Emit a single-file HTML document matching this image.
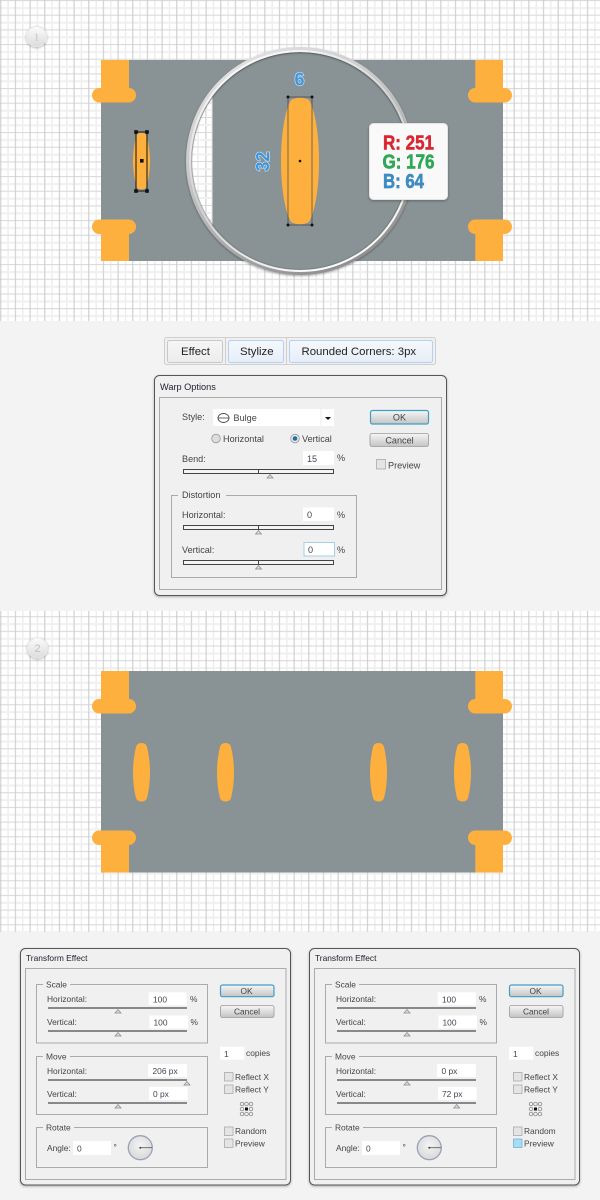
<!DOCTYPE html>
<html><head><meta charset="utf-8"><style>
html,body{margin:0;padding:0;background:#f3f3f3}
svg{display:block}
text{font-family:"Liberation Sans",sans-serif;font-size:8.4px;fill:#444}
.w text{font-size:9.1px}
.w text.t,.t{font-size:9.2px;fill:#223}
.tt{font-size:8.4px;fill:#223}
.v{fill:#445}
.bc{font-size:11.4px;fill:#222}
.rgb{font-size:20px;font-weight:bold;stroke-width:.5;paint-order:stroke}
.lab{font-size:18px;font-weight:bold;fill:#3f95dc;stroke:#cfe8fb;stroke-width:1.2;paint-order:stroke}
.in{fill:#fff}
.gb{fill:none;stroke:#aaa;stroke-width:1}
.lb{fill:#f0f0f0}
.dlg{fill:#f0f0f0;stroke:#555;stroke-width:1}
.pan{fill:#f0f0f0;stroke:#aaa;stroke-width:1}
.btn{fill:url(#bt);stroke:#999;stroke-width:.8}
.ok{fill:url(#bt);stroke:#3c9fc6;stroke-width:1.2}
.cb{fill:#e4e4e4;stroke:#aaa;stroke-width:.8}
.sl{fill:#f4f4f4;stroke:#444;stroke-width:1}
.ln{stroke:#666;stroke-width:1.5}
.tri{fill:#ddd;stroke:#888;stroke-width:.7}
.or{fill:#fdb03e}
</style></head><body>
<svg width="600" height="1200" viewBox="0 0 600 1200" xmlns="http://www.w3.org/2000/svg">
<defs>
<pattern id="g" patternUnits="userSpaceOnUse" width="14.67" height="14.67">
<rect width="14.67" height="14.67" fill="#fff"/>
<rect x="7.6" width="1" height="14.67" fill="#e6e6e6"/>
<rect y="7" width="14.67" height="2" fill="#f0f0f0"/>
<rect y="0" width="14.67" height="1.1" fill="#dadada"/>
<rect x="0.2" width="1.1" height="14.67" fill="#cdcdcd"/>
</pattern>
<linearGradient id="bt" x1="0" y1="0" x2="0" y2="1"><stop offset="0" stop-color="#f6f6f6"/><stop offset="1" stop-color="#c4c4c4"/></linearGradient>
<linearGradient id="ef" x1="0" y1="0" x2="0" y2="1"><stop offset="0" stop-color="#f6f6f6"/><stop offset="1" stop-color="#ececec"/></linearGradient>
<linearGradient id="bl" x1="0" y1="0" x2="0" y2="1"><stop offset="0" stop-color="#f5f8fc"/><stop offset="1" stop-color="#e6eef8"/></linearGradient>
<linearGradient id="ring" x1="0.2" y1="0" x2="0.7" y2="1"><stop offset="0" stop-color="#e4e4e4"/><stop offset=".5" stop-color="#bdbdbd"/><stop offset="1" stop-color="#8e8e8e"/></linearGradient>
<linearGradient id="ring2" x1="0.2" y1="0" x2="0.7" y2="1"><stop offset="0" stop-color="#fff"/><stop offset=".5" stop-color="#cfcfcf"/><stop offset="1" stop-color="#fff"/></linearGradient>
<linearGradient id="bd" x1="0" y1="0" x2="0" y2="1"><stop offset="0" stop-color="#fbfbfb"/><stop offset="1" stop-color="#dcdcdc"/></linearGradient>
<radialGradient id="dial" cx=".5" cy=".4" r=".6"><stop offset="0" stop-color="#f4f4f4"/><stop offset="1" stop-color="#d8d8d8"/></radialGradient>
<filter id="sh" x="-20%" y="-20%" width="140%" height="140%"><feDropShadow dx="0" dy="1" stdDeviation="1.2" flood-color="#000" flood-opacity=".3"/></filter>
<filter id="sh2" x="-10%" y="-10%" width="120%" height="120%"><feDropShadow dx="0" dy="1" stdDeviation="1" flood-color="#000" flood-opacity=".35"/></filter>
</defs>

<rect width="600" height="1200" fill="#f3f3f3"/>

<!-- Panel 1 -->
<rect width="600" height="321" fill="url(#g)"/>
<circle cx="36.5" cy="36.5" r="10" fill="url(#bd)" stroke="#e8e8e8" filter="url(#sh)"/>
<text x="36.5" y="40.5" text-anchor="middle" style="font-size:11px;fill:#c4c4c4;font-family:'Liberation Serif',serif">1</text>
<rect x="101" y="60" width="402" height="201" fill="#899294"/>
<rect class="or" x="101" y="60" width="28" height="30"/>
<rect class="or" x="92" y="88" width="44" height="14.5" rx="7.2"/>
<rect class="or" x="92" y="219.5" width="44" height="14.5" rx="7.2"/>
<rect class="or" x="101" y="232" width="28" height="29"/>
<rect class="or" x="475.3" y="60" width="27.7" height="30"/>
<rect class="or" x="468" y="88" width="44" height="14.5" rx="7.2"/>
<rect class="or" x="468" y="219.5" width="44" height="14.5" rx="7.2"/>
<rect class="or" x="475.3" y="232" width="27.7" height="29"/>
<path class="or" d="M137 134Q141.500 131.500 146 134C148 140 150 150 150 161C150 172 148 182 146 188Q141.500 191 137 188C135 182 133 172 133 161C133 150 135 140 137 134Z"/>
<rect x="136" y="132" width="11" height="59" fill="none" stroke="#111" stroke-width="1"/>
<g fill="#111"><rect x="134.200" y="130.200" width="3.600" height="3.600"/><rect x="145.200" y="130.200" width="3.600" height="3.600"/><rect x="134.200" y="189.200" width="3.600" height="3.600"/><rect x="145.200" y="189.200" width="3.600" height="3.600"/><rect x="140" y="159" width="3.600" height="3.600"/></g>

<!-- Magnifier -->
<circle cx="300" cy="161" r="109" fill="#899294"/>
<path d="M212 96.700A109 109 0 0 0 212 225.300Z" fill="#fff"/>
<path d="M198 122.600V199.400M212 97V225" stroke="#e6e6e6" stroke-width="1" fill="none"/>
<path d="M205.900 106V216" stroke="#cdcdcd" stroke-width="1.100" fill="none"/>
<path d="M203.700 110H212M197.100 125H212M193 140H212M191.200 154.500H212M191.300 169H212M193.500 184H212M197.500 198H212M204.200 213H212" stroke="#f0f0f0" stroke-width="2" fill="none"/>
<path d="M207.700 103H212M200.100 117.500H212M194.800 132.500H212M192 147H212M191 161.500H212M192.100 176.300H212M195.200 191H212M200.500 205.500H212M208.400 220H212" stroke="#dadada" stroke-width="1.100" fill="none"/>
<path class="or" d="M291 100Q300 95.500 309 100C314 108 319 130 319 161C319 192 314 214 309 222Q300 226.500 291 222C286 214 281 192 281 161C281 130 286 108 291 100Z"/>
<rect x="288" y="97" width="24" height="128" fill="none" stroke="#444" stroke-width=".7"/>
<g fill="#111"><circle cx="288" cy="97" r="1.500"/><circle cx="312" cy="97" r="1.500"/><circle cx="288" cy="225" r="1.500"/><circle cx="312" cy="225" r="1.500"/><circle cx="300" cy="161" r="1.300"/></g>
<circle cx="300" cy="161" r="108.300" fill="none" stroke="#6f7779" stroke-width="1" opacity=".5"/>
<circle cx="300" cy="161" r="111.500" fill="none" stroke="url(#ring)" stroke-width="5" filter="url(#sh2)"/>
<circle cx="300" cy="161" r="110" fill="none" stroke="url(#ring2)" stroke-width="2"/>
<text class="lab" x="299.500" y="85.500" text-anchor="middle">6</text>
<text class="lab" transform="translate(269,161.500) rotate(-90)" text-anchor="middle">32</text>

<rect x="369.500" y="123.500" width="78" height="76" rx="4" fill="#f9f9f9" stroke="#e4e4e4" filter="url(#sh)"/>
<text class="rgb" x="383" y="149.700" textLength="51" lengthAdjust="spacingAndGlyphs" style="fill:#e0242e;stroke:#a91c24">R: 251</text>
<text class="rgb" x="382.500" y="168.700" textLength="52" lengthAdjust="spacingAndGlyphs" style="fill:#2bab55;stroke:#1d7f3e">G: 176</text>
<text class="rgb" x="383" y="188" textLength="41" lengthAdjust="spacingAndGlyphs" style="fill:#3a8dc6;stroke:#24628f">B: 64</text>

<!-- Breadcrumb -->
<rect x="164.500" y="337.500" width="271" height="27" rx="2" fill="#f0f0f0" stroke="#cfcfcf"/>
<path d="M225.500 337.500V364.500M286.500 337.500V364.500" stroke="#cfcfcf"/>
<rect x="167.500" y="340.500" width="55" height="22" rx="2" fill="url(#ef)" stroke="#c8c8c8"/>
<rect x="228.500" y="340.500" width="55" height="22" rx="2" fill="url(#bl)" stroke="#b4d0ee"/>
<rect x="289.500" y="340.500" width="143" height="22" rx="2" fill="url(#bl)" stroke="#b4d0ee"/>
<text class="bc" x="181" y="355">Effect</text>
<text class="bc" x="240" y="355">Stylize</text>
<text class="bc" x="301.500" y="355">Rounded Corners: 3px</text>

<!-- Warp dialog -->
<g class="w">
<rect class="dlg" x="154.500" y="375.500" width="292" height="220" rx="5" filter="url(#sh)"/>
<text class="t" x="160" y="390">Warp Options</text>
<rect class="pan" x="159.500" y="397.500" width="282" height="192"/>
<text x="182" y="420">Style:</text>
<rect class="in" x="213" y="409" width="121" height="17"/>
<path d="M321 409V426" stroke="#eee"/>
<ellipse cx="223.500" cy="418" rx="5.500" ry="4.500" fill="none" stroke="#444" stroke-width=".9"/><path d="M218 418H229" stroke="#444" stroke-width=".8"/>
<text x="233.500" y="421">Bulge</text>
<path d="M325 417H331L328 420Z" fill="#111"/>
<circle cx="216" cy="438.500" r="4.300" fill="#ddd" stroke="#999" stroke-width=".8"/>
<text x="223" y="442">Horizontal</text>
<circle cx="295" cy="438.500" r="4.300" fill="#e8e8e8" stroke="#999" stroke-width=".8"/><circle cx="295" cy="438.500" r="2.300" fill="#1f6fa8"/>
<text x="302" y="442">Vertical</text>
<text x="182" y="462">Bend:</text>
<rect class="in" x="303" y="451" width="31" height="14"/>
<text class="v" x="307" y="462">15</text>
<text x="337" y="461">%</text>
<rect class="sl" x="183.500" y="469.500" width="150" height="4"/>
<path d="M258.500 469V474" stroke="#444"/>
<path class="tri" d="M270 474.500L273 478H267Z"/>
<rect x="370.500" y="410.500" width="58" height="13.500" rx="2" class="ok"/>
<text x="399.500" y="420.500" text-anchor="middle">OK</text>
<rect x="370" y="433.500" width="58.500" height="13" rx="2" class="btn"/>
<text x="399.500" y="443.500" text-anchor="middle">Cancel</text>
<rect class="cb" x="376.500" y="459.500" width="9" height="9.500"/>
<text x="388" y="468.500">Preview</text>

<rect class="gb" x="171.500" y="495.500" width="185" height="82"/>
<rect class="lb" x="178" y="490" width="48" height="10"/>
<text x="182" y="498">Distortion</text>
<text x="182" y="518">Horizontal:</text>
<rect class="in" x="303" y="507.500" width="31" height="13.500"/>
<text class="v" x="307" y="518">0</text>
<text x="337" y="518">%</text>
<rect class="sl" x="183.500" y="525.500" width="150" height="4"/>
<path d="M258.500 525V530" stroke="#444"/>
<path class="tri" d="M258.500 530.500L261.500 534H255.500Z"/>
<text x="182" y="553">Vertical:</text>
<rect x="304" y="542.500" width="30.500" height="13.500" fill="#fff" stroke="#a6cdea"/>
<text class="v" x="308" y="553">0</text>
<text x="337" y="553">%</text>
<rect class="sl" x="183.500" y="560.500" width="150" height="4"/>
<path d="M258.500 560V565" stroke="#444"/>
<path class="tri" d="M258.500 565.500L261.500 569H255.500Z"/>
</g>

<!-- Panel 2 -->
<rect y="611" width="600" height="321" fill="url(#g)"/>
<circle cx="37.500" cy="648" r="10" fill="url(#bd)" stroke="#e8e8e8" filter="url(#sh)"/>
<text x="37.500" y="652" text-anchor="middle" style="font-size:11px;fill:#c0c0c0">2</text>
<rect x="101" y="671" width="402" height="201.500" fill="#899294"/>
<rect class="or" x="101" y="671" width="28" height="30"/>
<rect class="or" x="92" y="699" width="44" height="14.500" rx="7.200"/>
<rect class="or" x="92" y="830.500" width="44" height="14.500" rx="7.200"/>
<rect class="or" x="101" y="843" width="28" height="29.500"/>
<rect class="or" x="475.300" y="671" width="27.700" height="30"/>
<rect class="or" x="468" y="699" width="44" height="14.500" rx="7.200"/>
<rect class="or" x="468" y="830.500" width="44" height="14.500" rx="7.200"/>
<rect class="or" x="475.300" y="843" width="27.700" height="29.500"/>
<path class="or" d="M136 747Q137 743 141.500 743Q146 743 147 747C149 755 150 764 150 772.500C150 781 149 790 147 798Q146 801.500 141.500 801.500Q137 801.500 136 798C134 790 133 781 133 772.500C133 764 134 755 136 747Z"/>
<path class="or" d="M220 747Q221 743 225.500 743Q230 743 231 747C233 755 234 764 234 772.500C234 781 233 790 231 798Q230 801.500 225.500 801.500Q221 801.500 220 798C218 790 217 781 217 772.500C217 764 218 755 220 747Z"/>
<path class="or" d="M373 747Q374 743 378.500 743Q383 743 384 747C386 755 387 764 387 772.500C387 781 386 790 384 798Q383 801.500 378.500 801.500Q374 801.500 373 798C371 790 370 781 370 772.500C370 764 371 755 373 747Z"/>
<path class="or" d="M457 747Q458 743 462.500 743Q467 743 468 747C470 755 471 764 471 772.500C471 781 470 790 468 798Q467 801.500 462.500 801.500Q458 801.500 457 798C455 790 454 781 454 772.500C454 764 455 755 457 747Z"/>

<!-- Transform dialog left -->
<g>
<rect class="dlg" x="20.500" y="948.500" width="270" height="236.500" rx="5" filter="url(#sh)"/>
<text class="tt" x="26" y="961">Transform Effect</text>
<rect class="pan" x="25.500" y="968.500" width="260.500" height="211"/>
<rect class="gb" x="36.500" y="984.500" width="171" height="58.500"/>
<rect class="lb" x="43" y="979" width="27" height="10"/>
<text x="46" y="987.500">Scale</text>
<text x="47" y="1002">Horizontal:</text>
<rect class="in" x="148.700" y="992.300" width="38" height="13"/>
<text class="v" x="153" y="1002.500">100</text>
<text x="190" y="1002">%</text>
<path class="ln" d="M48 1008H187"/>
<path class="tri" d="M118 1009.500L121 1013H115Z"/>
<text x="47" y="1025">Vertical:</text>
<rect class="in" x="149.500" y="1015.500" width="38.500" height="13"/>
<text class="v" x="153.500" y="1025.500">100</text>
<text x="190.500" y="1025">%</text>
<path class="ln" d="M48 1031H187"/>
<path class="tri" d="M118 1032.500L121 1036H115Z"/>
<rect class="gb" x="36.500" y="1056.500" width="171" height="58"/>
<rect class="lb" x="43" y="1051" width="27" height="10"/>
<text x="46" y="1059.500">Move</text>
<text x="47" y="1074">Horizontal:</text>
<rect class="in" x="148" y="1064" width="39" height="13"/>
<text class="v" x="152.500" y="1074">206 px</text>
<path class="ln" d="M48 1080H187"/>
<path class="tri" d="M187 1081.500L190 1085H184Z"/>
<text x="47" y="1097">Vertical:</text>
<rect class="in" x="149" y="1087" width="38.700" height="13"/>
<text class="v" x="153" y="1097">0 px</text>
<path class="ln" d="M48 1103H187"/>
<path class="tri" d="M118 1104.500L121 1108H115Z"/>
<rect class="gb" x="36.500" y="1127.500" width="171" height="40"/>
<rect class="lb" x="43" y="1122" width="31" height="10"/>
<text x="46" y="1130.500">Rotate</text>
<text x="47" y="1151">Angle:</text>
<rect class="in" x="73" y="1141" width="38" height="14"/>
<text class="v" x="77" y="1151.500">0</text>
<text x="113.500" y="1150">°</text>
<circle cx="140.300" cy="1147.700" r="12" fill="url(#dial)" stroke="#9aa2b8" stroke-width="1.300"/>
<path d="M140.300 1147.700H152" stroke="#555" stroke-width=".8"/><circle cx="140.300" cy="1147.700" r="1" fill="#444"/>
<rect class="ok" x="220.500" y="985" width="53.500" height="11.700" rx="2"/>
<text x="246.500" y="994" text-anchor="middle">OK</text>
<rect class="btn" x="220.500" y="1005.500" width="53.500" height="12" rx="2"/>
<text x="247" y="1014.500" text-anchor="middle">Cancel</text>
<rect class="in" x="220" y="1046.700" width="24.300" height="13"/>
<text class="v" x="224" y="1057">1</text>
<text x="246" y="1056">copies</text>
<rect class="cb" x="224.500" y="1072.500" width="8.500" height="8.500"/>
<text x="235" y="1080">Reflect X</text>
<rect class="cb" x="224.500" y="1085" width="8.500" height="8.500"/>
<text x="235" y="1092.500">Reflect Y</text>
<g fill="none" stroke="#777" stroke-width=".7"><circle cx="242" cy="1104" r="1.800"/><circle cx="246.500" cy="1104" r="1.800"/><circle cx="251" cy="1104" r="1.800"/><circle cx="242" cy="1109" r="1.800"/><circle cx="251" cy="1109" r="1.800"/><circle cx="242" cy="1114" r="1.800"/><circle cx="246.500" cy="1114" r="1.800"/><circle cx="251" cy="1114" r="1.800"/></g><rect x="245" y="1107.500" width="3" height="3" fill="#111"/>
<rect class="cb" x="224.500" y="1127" width="8.500" height="8.500"/>
<text x="235" y="1134">Random</text>
<rect class="cb" x="224.500" y="1139" width="8.500" height="8.500"/>
<text x="235" y="1146.500">Preview</text>
</g>

<!-- Transform dialog right -->
<g>
<rect class="dlg" x="309.500" y="948.500" width="270" height="236.500" rx="5" filter="url(#sh)"/>
<text class="tt" x="315" y="961">Transform Effect</text>
<rect class="pan" x="314.500" y="968.500" width="260.500" height="211"/>
<rect class="gb" x="325.500" y="984.500" width="171" height="58.500"/>
<rect class="lb" x="332" y="979" width="27" height="10"/>
<text x="335" y="987.500">Scale</text>
<text x="336" y="1002">Horizontal:</text>
<rect class="in" x="437.700" y="992.300" width="38" height="13"/>
<text class="v" x="442" y="1002.500">100</text>
<text x="479" y="1002">%</text>
<path class="ln" d="M337 1008H476"/>
<path class="tri" d="M407 1009.500L410 1013H404Z"/>
<text x="336" y="1025">Vertical:</text>
<rect class="in" x="438.500" y="1015.500" width="38.500" height="13"/>
<text class="v" x="442.500" y="1025.500">100</text>
<text x="479.500" y="1025">%</text>
<path class="ln" d="M337 1031H476"/>
<path class="tri" d="M407 1032.500L410 1036H404Z"/>
<rect class="gb" x="325.500" y="1056.500" width="171" height="58"/>
<rect class="lb" x="332" y="1051" width="27" height="10"/>
<text x="335" y="1059.500">Move</text>
<text x="336" y="1074">Horizontal:</text>
<rect class="in" x="437" y="1064" width="39" height="13"/>
<text class="v" x="441.500" y="1074">0 px</text>
<path class="ln" d="M337 1080H476"/>
<path class="tri" d="M407 1081.500L410 1085H404Z"/>
<text x="336" y="1097">Vertical:</text>
<rect class="in" x="438" y="1087" width="38.700" height="13"/>
<text class="v" x="442" y="1097">72 px</text>
<path class="ln" d="M337 1103H476"/>
<path class="tri" d="M456.700 1104.500L459.700 1108H453.700Z"/>
<rect class="gb" x="325.500" y="1127.500" width="171" height="40"/>
<rect class="lb" x="332" y="1122" width="31" height="10"/>
<text x="335" y="1130.500">Rotate</text>
<text x="336" y="1151">Angle:</text>
<rect class="in" x="362" y="1141" width="38" height="14"/>
<text class="v" x="366" y="1151.500">0</text>
<text x="402.500" y="1150">°</text>
<circle cx="429.300" cy="1147.700" r="12" fill="url(#dial)" stroke="#9aa2b8" stroke-width="1.300"/>
<path d="M429.300 1147.700H441" stroke="#555" stroke-width=".8"/><circle cx="429.300" cy="1147.700" r="1" fill="#444"/>
<rect class="ok" x="509.500" y="985" width="53.500" height="11.700" rx="2"/>
<text x="535.500" y="994" text-anchor="middle">OK</text>
<rect class="btn" x="509.500" y="1005.500" width="53.500" height="12" rx="2"/>
<text x="536" y="1014.500" text-anchor="middle">Cancel</text>
<rect class="in" x="509" y="1046.700" width="24.300" height="13"/>
<text class="v" x="513" y="1057">1</text>
<text x="535" y="1056">copies</text>
<rect class="cb" x="513.500" y="1072.500" width="8.500" height="8.500"/>
<text x="524" y="1080">Reflect X</text>
<rect class="cb" x="513.500" y="1085" width="8.500" height="8.500"/>
<text x="524" y="1092.500">Reflect Y</text>
<g fill="none" stroke="#777" stroke-width=".7"><circle cx="531" cy="1104" r="1.800"/><circle cx="535.500" cy="1104" r="1.800"/><circle cx="540" cy="1104" r="1.800"/><circle cx="531" cy="1109" r="1.800"/><circle cx="540" cy="1109" r="1.800"/><circle cx="531" cy="1114" r="1.800"/><circle cx="535.500" cy="1114" r="1.800"/><circle cx="540" cy="1114" r="1.800"/></g><rect x="534" y="1107.500" width="3" height="3" fill="#111"/>
<rect class="cb" x="513.500" y="1127" width="8.500" height="8.500"/>
<text x="524" y="1134">Random</text>
<rect x="513.500" y="1139" width="8.500" height="8.500" fill="#a8dcf6" stroke="#6fb4d8" stroke-width=".8"/>
<text x="524" y="1146.500">Preview</text>
</g>
</svg>
</body></html>
